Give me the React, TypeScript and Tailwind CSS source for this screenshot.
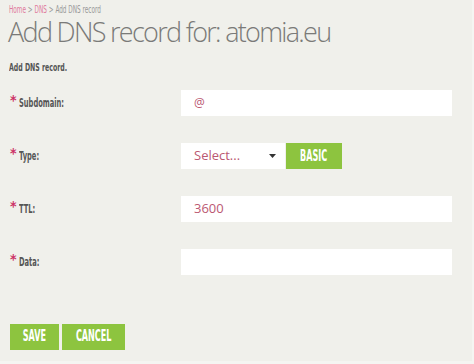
const narrow = "font-['DejaVu_Sans_Condensed','Liberation_Sans',sans-serif]";

function Squeeze({ children, center, s = "scale-x-[0.64]" }: { children: React.ReactNode; center?: boolean; s?: string }) {
  return (
    <span className={`inline-block whitespace-nowrap ${s} ${center ? "origin-center" : "origin-left"}`}>
      {children}
    </span>
  );
}

function Label({ text }: { text: string }) {
  return (
    <div className={`w-[181px] flex items-center pl-[10px] text-[12px] font-bold text-[#555] ${narrow}`}>
      <span className="text-[#cc3366] text-[14px] leading-none mr-[2px] -mt-[5px]">*</span>
      <Squeeze s="scale-x-[0.62]">{text}</Squeeze>
    </div>
  );
}

function GreenButton({ text, w }: { text: string; w: string }) {
  return (
    <button className={`${w} h-[26px] bg-[#8dc43f] text-white text-[15px] font-bold ${narrow}`}>
      <Squeeze center s="scale-x-[0.6]">{text}</Squeeze>
    </button>
  );
}

export default function App() {
  return (
    <div className="w-[474px] h-[364px] bg-[#f5f5f2] overflow-hidden">
      <div className="h-[361px] w-[472px] bg-[#f0f0eb] flex flex-col">
        <div className={`pl-[9px] pt-[2px] h-[14px] text-[10px] text-[#999] ${narrow}`}>
          <Squeeze>
            <span className="text-[#e07a9c]">Home</span> &gt; <span className="text-[#e07a9c]">DNS</span> &gt; Add DNS record
          </Squeeze>
        </div>
        <h1 className="pl-[8px] text-[27px] leading-[36px] font-light text-[#7a7a78] font-['Open_Sans',sans-serif] tracking-[-1.7px]">
          Add DNS record for: atomia.eu
        </h1>
        <div className={`pl-[9px] mt-[10px] text-[11px] font-bold text-[#555] ${narrow}`}>
          <Squeeze s="scale-x-[0.63]">Add DNS record.</Squeeze>
        </div>

        <div className="mt-[13px] flex flex-col gap-[27px]">
          <div className="flex h-[26px]">
            <Label text="Subdomain:" />
            <div className="w-[271px] bg-white flex items-center pl-[13px] text-[12px] text-[#bb5872] font-['Open_Sans',sans-serif]">@</div>
          </div>
          <div className="flex h-[26px]">
            <Label text="Type:" />
            <div className="w-[104px] bg-white flex items-center justify-between pl-[13px] pr-[9px] text-[13px] text-[#bb5872] font-['Open_Sans',sans-serif]">
              <span>Select...</span>
              <svg width="7" height="4" viewBox="0 0 7 4"><path d="M0 0h7L3.5 4z" fill="#333" /></svg>
            </div>
            <div className="ml-[1px]">
              <GreenButton text="BASIC" w="w-[56px]" />
            </div>
          </div>
          <div className="flex h-[26px]">
            <Label text="TTL:" />
            <div className="w-[271px] bg-white flex items-center pl-[13px] text-[13px] text-[#bb5872] font-['Open_Sans',sans-serif]">3600</div>
          </div>
          <div className="flex h-[26px]">
            <Label text="Data:" />
            <div className="w-[271px] bg-white" />
          </div>
        </div>

        <div className="mt-[49px] pl-[10px] flex gap-[3px]">
          <GreenButton text="SAVE" w="w-[49px]" />
          <GreenButton text="CANCEL" w="w-[63px]" />
        </div>
      </div>
    </div>
  );
}
